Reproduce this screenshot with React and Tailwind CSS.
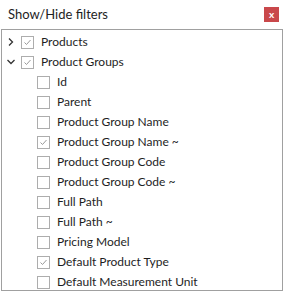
const children = [
  { label: 'Id' },
  { label: 'Parent' },
  { label: 'Product Group Name' },
  { label: 'Product Group Name ~', checked: true },
  { label: 'Product Group Code' },
  { label: 'Product Group Code ~' },
  { label: 'Full Path' },
  { label: 'Full Path ~' },
  { label: 'Pricing Model' },
  { label: 'Default Product Type', checked: true },
  { label: 'Default Measurement Unit' },
]

function Box({ checked }) {
  return (
    <span className="w-[13px] h-[13px] border border-[#adadad] bg-white flex items-center justify-center flex-shrink-0">
      {checked && (
        <svg width="9" height="9" viewBox="0 0 9 9">
          <path d="M1.5 4.5 L3.5 6.5 L7.5 2" fill="none" stroke="#9a9a9a" strokeWidth="1" />
        </svg>
      )}
    </span>
  )
}

function Chevron({ open }) {
  return (
    <svg width="8" height="8" viewBox="0 0 8 8" className="flex-shrink-0">
      {open ? (
        <path d="M0.5 2 L4 5.5 L7.5 2" fill="none" stroke="#333" strokeWidth="1.3" />
      ) : (
        <path d="M2 0.5 L5.5 4 L2 7.5" fill="none" stroke="#333" strokeWidth="1.3" />
      )}
    </svg>
  )
}

export default function App() {
  return (
    <div className="w-[284px] h-[291px] bg-white flex flex-col text-[#1e1e1e]" style={{ fontFamily: 'Lato, sans-serif' }}>
      <div className="h-[29px] flex items-center justify-between pl-2 pr-[5px]">
        <span className="text-[13px] mt-[1px]">Show/Hide filters</span>
        <button className="w-[15px] h-[15px] bg-[#c9484b] text-white text-[10px] font-bold leading-none flex items-center justify-center -mt-[1px]">x</button>
      </div>
      <div className="flex-1 ml-px mr-px border border-[#a0a0a0] pt-[2px] overflow-hidden">
        <div className="h-5 flex items-center pl-[5px]">
          <Chevron />
          <span className="ml-[6px]"><Box checked /></span>
          <span className="ml-[7px] text-[12px]">Products</span>
        </div>
        <div className="h-5 flex items-center pl-[5px]">
          <Chevron open />
          <span className="ml-[6px]"><Box checked /></span>
          <span className="ml-[7px] text-[12px]">Product Groups</span>
        </div>
        {children.map((c) => (
          <div key={c.label} className="h-5 flex items-center pl-[35px]">
            <Box checked={c.checked} />
            <span className="ml-[7px] text-[12px]">{c.label}</span>
          </div>
        ))}
      </div>
    </div>
  )
}
